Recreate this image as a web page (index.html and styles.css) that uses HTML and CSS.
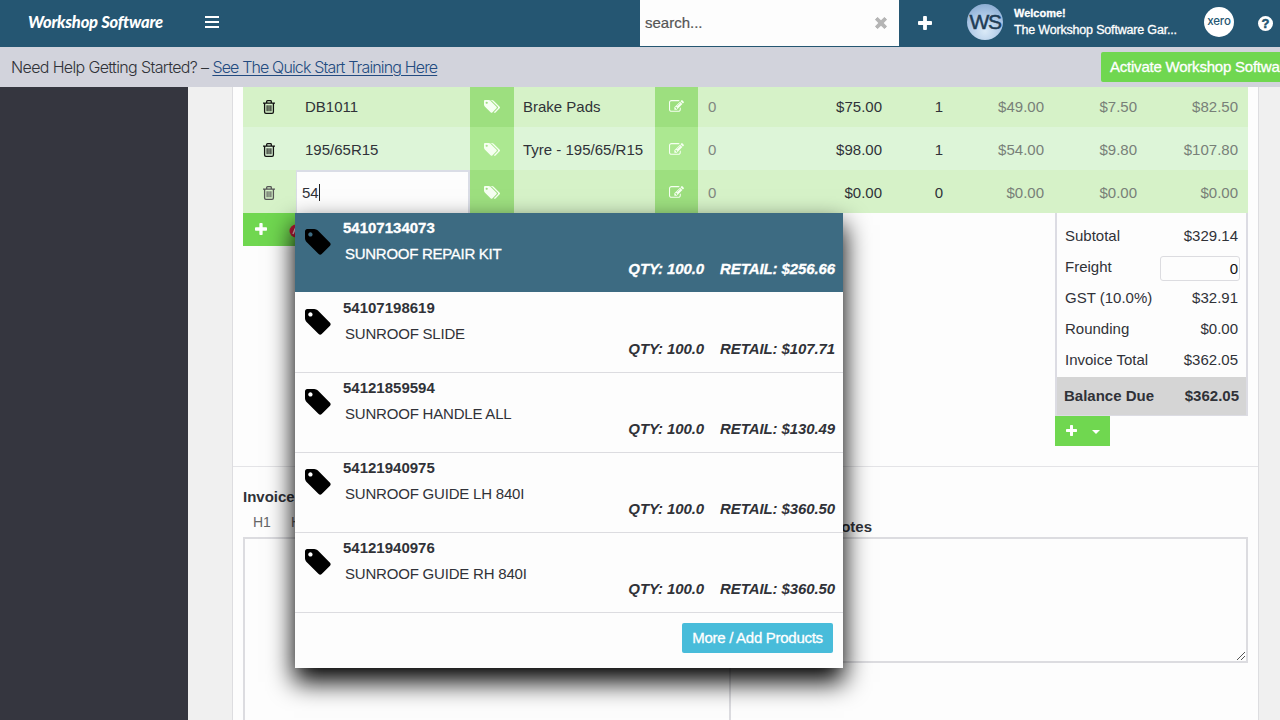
FILE: index.html
```
<!DOCTYPE html>
<html lang="en">
<head>
<meta charset="utf-8">
<title>Workshop Software</title>
<link rel="stylesheet" href="styles.css">
</head>
<body>
<svg class="sprite" width="0" height="0">
  <symbol id="tag" viewBox="0 0 1536 1536"><path fill-rule="evenodd" d="M448 320q0-53-37.500-90.500t-90.500-37.500-90.500 37.500-37.500 90.500 37.500 90.500 90.500 37.500 90.500-37.500 37.500-90.500zm1067 576q0 53-37 90l-491 492q-39 37-91 37-53 0-90-37l-715-716q-38-37-64.500-101t-26.500-117v-416q0-52 38-90t90-38h416q53 0 117 26.500t102 64.500l715 714q37 39 37 91z"/></symbol>
  <symbol id="tags" viewBox="0 0 1900 1536"><path fill-rule="evenodd" d="M448 320q0-53-37.500-90.500t-90.500-37.500-90.500 37.500-37.500 90.500 37.500 90.500 90.500 37.500 90.500-37.500 37.500-90.500zm1067 576q0 53-37 90l-491 492q-39 37-91 37-53 0-90-37l-715-716q-38-37-64.500-101t-26.500-117v-416q0-52 38-90t90-38h416q53 0 117 26.500t102 64.500l715 714q37 39 37 91zm384 0q0 53-37 90l-491 492q-39 37-91 37-36 0-59-14t-53-45l470-470q37-37 37-90 0-52-37-91l-715-714q-38-38-102-64.500t-117-26.500h224q53 0 117 26.500t102 64.500l715 714q37 39 37 91z"/></symbol>
  <symbol id="plus" viewBox="192 128 1408 1408"><path d="M1600 736v192q0 40-28 68t-68 28h-416v416q0 40-28 68t-68 28h-192q-40 0-68-28t-28-68v-416h-416q-40 0-68-28t-28-68v-192q0-40 28-68t68-28h416v-416q0-40 28-68t68-28h192q40 0 68 28t28 68v416h416q40 0 68 28t28 68z"/></symbol>
  <symbol id="edit" viewBox="0 128 1792 1536"><path fill-rule="evenodd" d="M888 1184l116-116-152-152-116 116v56h96v96h56zm440-720q-16-16-33 1l-350 350q-17 17-1 33t33-1l350-350q17-17 1-33zm80 594v190q0 119-84.500 203.500t-203.500 84.500h-832q-119 0-203.500-84.500t-84.500-203.500v-832q0-119 84.500-203.500t203.500-84.500h832q63 0 117 25 15 7 18 23 3 17-9 29l-49 49q-14 14-32 8-23-6-45-6h-832q-66 0-113 47t-47 113v832q0 66 47 113t113 47h832q66 0 113-47t47-113v-126q0-13 9-22l64-64q15-15 35-7t20 29zm-96-738l288 288-672 672h-288v-288zm444 132l-92 92-288-288 92-92q28-28 68-28t68 28l152 152q28 28 28 68t-28 68z"/></symbol>
  <symbol id="trash" viewBox="0 0 12 14"><path fill="none" stroke="currentColor" stroke-width="1.300" d="M0 3.200h12M3.700 3V1.500q0-.8.8-.8h3q.8 0 .8.800V3M1.600 3.500v8.400q0 1.400 1.400 1.400h6q1.400 0 1.400-1.400V3.500"/><path stroke="currentColor" stroke-width="1.100" d="M4.100 5.300v6M6 5.300v6M7.900 5.300v6"/></symbol>
</svg>

<header class="topbar">
  <div class="logo">Workshop Software</div>
  <div class="burger"><i></i><i></i><i></i></div>
  <div class="search"><span>search...</span><svg class="clear"><use href="#plus"/></svg></div>
  <svg class="add"><use href="#plus"/></svg>
  <div class="avatar"><span>WS</span></div>
  <div class="welcome"><b>Welcome!</b><span>The Workshop Software Gar...</span></div>
  <div class="xero">xero</div>
  <div class="help">?</div>
</header>

<div class="notice">
  <div class="notice-text"><span>Need Help Getting Started? –</span><a>See The Quick Start Training Here</a></div>
  <div class="activate">Activate Workshop Software</div>
</div>

<div class="page">
  <aside class="sidebar"></aside>
  <main class="card">
    <section class="invoice">
      <div class="row first">
        <span class="c"><svg class="trash"><use href="#trash"/></svg></span><span class="code">DB1011</span><span class="c g"><svg class="tags"><use href="#tags"/></svg></span><span class="desc">Brake Pads</span><span class="c g"><svg class="edit"><use href="#edit"/></svg></span><span class="zero">0</span><span class="n">$75.00</span><span class="n">1</span><span class="n m">$49.00</span><span class="n m">$7.50</span><span class="n m">$82.50</span>
      </div>
      <div class="row alt">
        <span class="c"><svg class="trash"><use href="#trash"/></svg></span><span class="code">195/65R15</span><span class="c g"><svg class="tags"><use href="#tags"/></svg></span><span class="desc">Tyre - 195/65/R15</span><span class="c g"><svg class="edit"><use href="#edit"/></svg></span><span class="zero">0</span><span class="n">$98.00</span><span class="n">1</span><span class="n m">$54.00</span><span class="n m">$9.80</span><span class="n m">$107.80</span>
      </div>
      <div class="row">
        <span class="c dim"><svg class="trash"><use href="#trash"/></svg></span><span class="entry">54<i class="caret"></i></span><span class="c g"><svg class="tags"><use href="#tags"/></svg></span><span class="desc"></span><span class="c g"><svg class="edit"><use href="#edit"/></svg></span><span class="zero">0</span><span class="n">$0.00</span><span class="n">0</span><span class="n m">$0.00</span><span class="n m">$0.00</span><span class="n m">$0.00</span>
      </div>

      <div class="below">
        <div class="addline"><svg><use href="#plus"/></svg><svg class="badge" viewBox="0 0 14 14"><circle cx="7" cy="7" r="6.500" fill="#c5183a"/><path d="M4 10l3-7 3 7" fill="none" stroke="#f3c9d0" stroke-width="1.500"/></svg></div>
        <div class="totals-col">
          <div class="totals">
            <div><span>Subtotal</span><span>$329.14</span></div>
            <div><span>Freight</span><span class="freight">0</span></div>
            <div><span>GST (10.0%)</span><span>$32.91</span></div>
            <div><span>Rounding</span><span>$0.00</span></div>
            <div><span>Invoice Total</span><span>$362.05</span></div>
            <div class="due"><span>Balance Due</span><span>$362.05</span></div>
          </div>
          <div class="pay"><svg><use href="#plus"/></svg><i></i></div>
        </div>
      </div>

      <div class="menu">
        <div class="item active"><svg><use href="#tag"/></svg><b>54107134073</b><span>SUNROOF REPAIR KIT</span><em><i>QTY: 100.0</i><i class="retail">RETAIL: $256.66</i></em></div>
        <div class="item"><svg><use href="#tag"/></svg><b>54107198619</b><span>SUNROOF SLIDE</span><em><i>QTY: 100.0</i><i class="retail">RETAIL: $107.71</i></em></div>
        <div class="item"><svg><use href="#tag"/></svg><b>54121859594</b><span>SUNROOF HANDLE ALL</span><em><i>QTY: 100.0</i><i class="retail">RETAIL: $130.49</i></em></div>
        <div class="item"><svg><use href="#tag"/></svg><b>54121940975</b><span>SUNROOF GUIDE LH 840I</span><em><i>QTY: 100.0</i><i class="retail">RETAIL: $360.50</i></em></div>
        <div class="item"><svg><use href="#tag"/></svg><b>54121940976</b><span>SUNROOF GUIDE RH 840I</span><em><i>QTY: 100.0</i><i class="retail">RETAIL: $360.50</i></em></div>
        <div class="foot"><span class="more">More / Add Products</span></div>
      </div>
    </section>

    <section class="notes">
      <div class="left"><b>Invoice</b><div class="tools"><span>H1</span><span>H2</span></div><div class="box"></div></div>
      <div class="right"><b>Notes</b><div class="box"><svg class="grip" viewBox="0 0 8 8"><path d="M0 8L8 0M4 8l4-4" stroke="#555" fill="none"/></svg></div></div>
    </section>
  </main>
</div>
</body>
</html>
```
FILE: styles.css
```
* { box-sizing: border-box; }
body { margin: 0; width: 1280px; height: 720px; overflow: hidden; font: 15px/20px "Liberation Sans", Arial, sans-serif; color: #303238; background: #f0f0f0; }
svg { fill: currentColor; flex: none; display: block; }
.sprite { position: absolute; }
.topbar { height: 47px; background: #255672; color: #fff; display: flex; align-items: center; }
.logo { width: 205px; padding-left: 28px; margin-top: -3px; font: italic 900 16.500px/44px Lato, sans-serif; letter-spacing: -0.200px; white-space: nowrap; }
.burger { width: 14px; display: grid; gap: 3px; margin: -4px 421px 0 0; }
.burger i { height: 2px; background: #fff; }
.search { width: 259px; height: 46px; margin-bottom: 1px; background: #fdfdfd; display: flex; align-items: center; justify-content: space-between; padding: 0 11px 0 5px; color: #555; -webkit-text-stroke: .2px #555; }
.clear { width: 14px; height: 14px; color: #b5b5b5; transform: rotate(45deg); }
.add { width: 14px; height: 14px; margin: -2px 35px 0 19px; }
.avatar { width: 36px; height: 36px; margin-top: -3px; border-radius: 50%; background: radial-gradient(circle at 50% 75%, #dbeaf7, #a9c5e5 55%, #7d9fc9); color: #1e3c56; font-size: 21px; letter-spacing: -1.500px; display: flex; align-items: center; justify-content: center; -webkit-text-stroke: .5px #1e3c56; }
.welcome { margin: -4px 0 0 11px; width: 190px; font-size: 12.500px; line-height: 17px; letter-spacing: -.18px; display: grid; white-space: nowrap; -webkit-text-stroke: .3px #fff; }
.welcome b { font-size: 11px; letter-spacing: 0; }
.xero { width: 30px; height: 30px; margin-top: -3px; border-radius: 50%; background: #fff; color: #255672; font: 500 11.500px/28px Inter, sans-serif; text-align: center; letter-spacing: -.1px; }
.help { width: 15px; height: 15px; margin: -1px 0 0 24px; border-radius: 50%; background: #fff; color: #255672; font: 900 13px/15px "Liberation Sans", sans-serif; text-align: center; -webkit-text-stroke: .5px #255672; }
.notice { height: 40px; background: #d2d3dc; display: flex; align-items: center; justify-content: space-between; overflow: hidden; padding-left: 11px; }
.notice-text { font: 300 16px/20px Inter, sans-serif; letter-spacing: -.64px; display: flex; gap: 4px; white-space: nowrap; }
.notice-text a { letter-spacing: -.85px; color: #234b80; text-decoration: underline; text-underline-offset: 2px; text-decoration-thickness: 1px; }
.activate { width: 179px; height: 30px; padding-left: 9px; background: #70d750; color: #fff; line-height: 30px; border-radius: 2px 0 0 2px; white-space: nowrap; letter-spacing: -.22px; overflow: hidden; -webkit-text-stroke: .3px #fff; }
.page { height: 633px; display: flex; overflow: hidden; }
.sidebar { width: 188px; background: #35363f; }
.card { width: 1027px; margin-left: 44px; background: #fdfdfd; border: solid #dddde0; border-width: 0 1px; }
.invoice { position: relative; height: 380px; padding-left: 10px; border-bottom: 1px solid #e4e4e7; }
.row { width: 1005px; height: 43px; background: #d6f2c8; display: grid; grid-template-columns: 53px 174px 44px 141px 43px 100px 84px 61px 101px 93px 111px; align-items: stretch; line-height: 45px; white-space: nowrap; }
.row.first { height: 40px; line-height: 40px; }
.row.alt { background: #ddf5d8; }
.c { display: flex; align-items: center; justify-content: center; }
.c.g { background: #9ddf7f; color: #f6fff2; }
.first .c.g { padding-bottom: 2px; }
.alt .c.g { background: #ace891; }
.trash { width: 12px; height: 14px; color: #111; margin-left: -1px; }
.dim .trash { color: #555; }
.tags { width: 16px; height: 13px; }
.edit { width: 15px; height: 13px; }
.code { padding-left: 9px; }
.desc { padding-left: 9px; }
.zero { padding-left: 10px; color: #808780; }
.n { text-align: right; }
.n.m { color: #788078; }
.n:last-child { padding-right: 10px; }
.entry { background: #fdfdfd; border: 2px solid #dadde6; border-left-width: 1px; padding-left: 5px; line-height: 39px; display: flex; align-items: center; }
.caret { width: 1px; height: 17px; background: #222; }
.below { width: 1005px; display: flex; justify-content: space-between; align-items: flex-start; }
.addline { width: 60px; height: 33px; background: #70d750; color: #fff; display: flex; align-items: center; padding-left: 12px; gap: 34px; }
.addline svg { width: 12px; height: 12px; margin-top: -1px; }
.addline .badge { width: 14px; height: 14px; margin-left: -12px; margin-top: 3px; }
.totals { width: 193px; border: 2px solid #dcdce3; border-top: 0; height: 203px; padding-top: 7px; }
.totals div { height: 31px; display: flex; justify-content: space-between; align-items: center; padding: 0 8px; }
.totals .freight { width: 80px; height: 25px; margin: 3px -2px 0 0; border: 1px solid #dcdce0; border-radius: 3px; text-align: right; line-height: 24px; padding-right: 1px; color: #111; }
.totals .due { height: 38px; margin-top: 2px; background: #d5d5d5; font-weight: bold; padding: 0 7px; }
.pay { width: 55px; height: 30px; background: #70d750; color: #fff; display: flex; align-items: center; padding-left: 11px; gap: 15px; }
.pay svg { width: 11px; height: 11px; margin-top: -1px; }
.pay i { border: solid transparent; border-width: 4px 4px 0; border-top-color: #fff; margin-top: 2px; }
.menu { position: absolute; left: 62px; top: 126px; width: 548px; height: 455px; background: #fdfdfd; box-shadow: 0 13px 24px 1px #000; z-index: 2; }
.item { height: 80px; border-bottom: 1px solid #dcdce0; display: grid; grid-template-columns: 48px 1fr; grid-template-rows: 28px 24px 20px; white-space: nowrap; }
.item svg { grid-row: 1 / 4; width: 26px; height: 26px; margin: 16px 0 0 9.500px; color: #000; }
.item b { line-height: 30px; }
.item span { padding-left: 2px; line-height: 26px; letter-spacing: -.2px; }
.item em { grid-column: 2; display: flex; justify-content: flex-end; gap: 16px; padding-right: 8px; font-weight: bold; letter-spacing: -.1px; line-height: 8px; }
.item.active { background: #3d6b82; color: #fff; border-color: #3d6b82; height: 79px; margin-bottom: 1px; -webkit-text-stroke: .3px #fff; }
.item.active span { letter-spacing: -.28px; }
.foot { display: flex; justify-content: flex-end; padding: 10px 10px 0; }
.more { width: 151px; height: 30px; background: #48bcda; color: #fff; border-radius: 2px; text-align: center; line-height: 30px; letter-spacing: -.28px; -webkit-text-stroke: .3px #fff; }
.notes { display: flex; gap: 16px; padding: 20px 10px 0; }
.left { width: 488px; }
.left b, .right b { display: block; }
.tools { display: flex; gap: 20px; height: 30px; padding-left: 10px; font-size: 14px; line-height: 30px; color: #666; }
.box { border: 2px solid #dcdce0; }
.left .box { height: 250px; }
.right { width: 501px; padding-top: 30px; }
.right b { width: 125px; text-align: right; }
.right .box { height: 126px; display: flex; align-items: flex-end; justify-content: flex-end; }
.grip { width: 8px; height: 8px; margin: 0 1px 1px 0; }
```
